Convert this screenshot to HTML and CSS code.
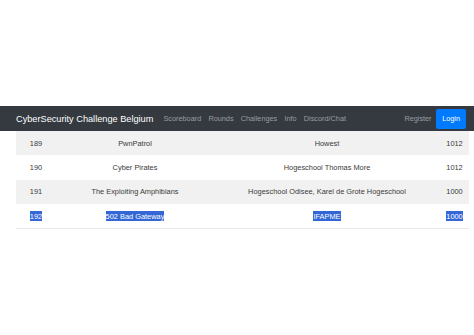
FILE: index.html
```html
<!DOCTYPE html>
<html lang="en">
<head>
    <meta charset="UTF-8">
    <meta name="viewport" content="width=device-width, initial-scale=1.0">
    <title>Scoreboard - CyberSecurity Challenge Belgium</title>
    <link rel="stylesheet" href="styles.css">
</head>
<body>

    <div class="page">
        <nav class="navbar">
            <a class="brand" href="#">CyberSecurity Challenge Belgium</a>
            <ul class="nav-links">
                <li><a href="#">Scoreboard</a></li>
                <li><a href="#">Rounds</a></li>
                <li><a href="#">Challenges</a></li>
                <li><a href="#">Info</a></li>
                <li><a href="#">Discord/Chat</a></li>
            </ul>
            <div class="nav-right">
                <a class="nav-link" href="#">Register</a>
                <a class="btn-login" href="#">Login</a>
            </div>
        </nav>

        <table class="scoreboard">
            <colgroup>
                <col class="col-rank">
                <col class="col-team">
                <col class="col-school">
                <col class="col-score">
            </colgroup>
            <tbody>
                <tr>
                    <td>189</td>
                    <td>PwnPatrol</td>
                    <td>Howest</td>
                    <td>1012</td>
                </tr>
                <tr>
                    <td>190</td>
                    <td>Cyber Pirates</td>
                    <td>Hogeschool Thomas More</td>
                    <td>1012</td>
                </tr>
                <tr>
                    <td>191</td>
                    <td>The Exploiting Amphibians</td>
                    <td>Hogeschool Odisee, Karel de Grote Hogeschool</td>
                    <td>1000</td>
                </tr>
                <tr class="last">
                    <td><span class="selected">192</span></td>
                    <td><span class="selected">502 Bad Gateway</span></td>
                    <td><span class="selected">IFAPME</span></td>
                    <td><span class="selected">1000</span></td>
                </tr>
            </tbody>
        </table>
    </div>

</body>
</html>
```

FILE: styles.css
```css
body {
    font-family: "Liberation Sans", Arial, sans-serif;
    background-color: #fff;
    color: #3a3a3a;
    margin: 0;
    padding: 0;
}
a {
    text-decoration: none;
}
.page {
    padding-top: 106px;
}
.navbar {
    display: flex;
    align-items: center;
    height: 25px;
    background-color: #343a40;
    padding: 0 8px 0 16px;
}
.brand {
    color: #fff;
    font-size: 9.2px;
    margin-right: 6.5px;
}
.nav-links {
    display: flex;
    align-items: center;
    list-style: none;
    margin: 0;
    padding: 0;
    font-size: 7.3px;
}
.nav-links li {
    display: flex;
}
.nav-links a,
.nav-link {
    color: #9b9da0;
    font-size: 7.3px;
    padding: 0 3.6px;
}
.nav-right {
    margin-left: auto;
    display: flex;
    align-items: center;
    gap: 1px;
}
.btn-login {
    display: flex;
    align-items: center;
    height: 20px;
    padding: 0 6px;
    background-color: #007bff;
    color: #fff;
    font-size: 7.3px;
    border-radius: 2px;
}
.scoreboard {
    margin-left: 16px;
    width: 453px;
    border-collapse: collapse;
    table-layout: fixed;
    font-size: 7.4px;
}
.col-rank {
    width: 40px;
}
.col-team {
    width: 158px;
}
.col-school {
    width: 226px;
}
.col-score {
    width: 29px;
}
.scoreboard td {
    height: 24.25px;
    padding: 0;
    text-align: center;
    vertical-align: middle;
}
.scoreboard tr:nth-child(odd) {
    background-color: #f1f1f1;
}
.scoreboard tr.last td {
    border-bottom: 1px solid #e9e9e9;
}
.selected {
    background-color: #3367d6;
    color: #fff;
    padding: 0.5px 0;
}
```
